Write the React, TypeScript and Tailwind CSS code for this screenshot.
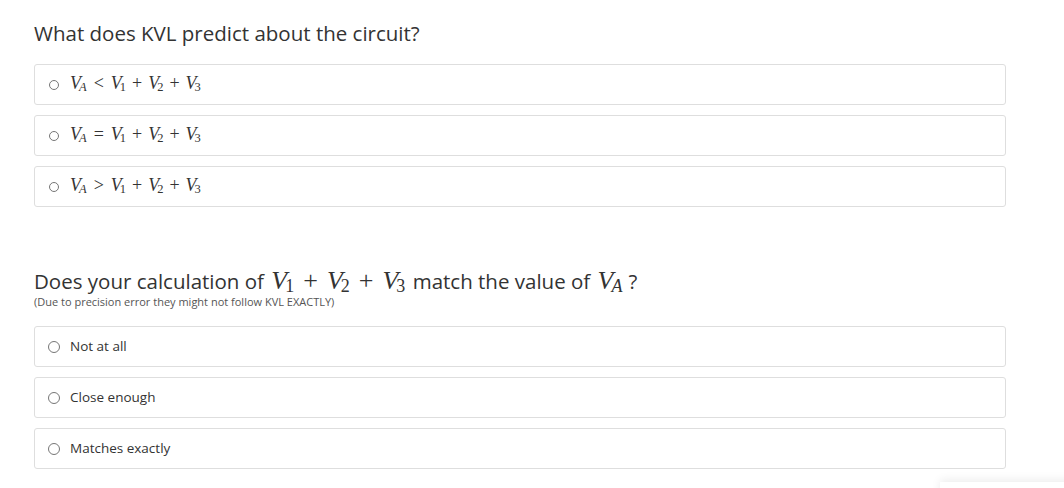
import type { ReactNode } from 'react';

const sans = { fontFamily: '"Open Sans", "Noto Sans", sans-serif' };

function V({ sub, big }: { sub: string; big?: boolean }) {
  return (
    <span className="whitespace-nowrap">
      <i>V</i>
      <sub
        className={
          big
            ? 'text-[18px] relative top-[3px] ml-[-2px]'
            : 'text-[12.5px] relative top-[2px] ml-[-2px]'
        }
        style={{ fontStyle: /[A-Z]/.test(sub) ? 'italic' : 'normal' }}
      >
        {sub}
      </sub>
    </span>
  );
}

function Math({ children, big }: { children: ReactNode; big?: boolean }) {
  return (
    <span
      className={big ? 'text-[26px] leading-none mx-[2px]' : 'text-[18px] leading-none'}
      style={{ fontFamily: '"Liberation Serif", "DejaVu Serif", serif' }}
    >
      {children}
    </span>
  );
}

function Op({ c, rel, big }: { c: string; rel?: boolean; big?: boolean }) {
  const cls = big
    ? 'mx-[9px] not-italic'
    : rel
      ? 'mx-[7px] not-italic'
      : 'mx-[6px] not-italic';
  return <span className={cls}>{c}</span>;
}

function Sum({ big }: { big?: boolean }) {
  return (
    <>
      <V sub="1" big={big} />
      <Op c="+" big={big} />
      <V sub="2" big={big} />
      <Op c="+" big={big} />
      <V sub="3" big={big} />
    </>
  );
}

function Radio({ small }: { small?: boolean }) {
  return (
    <span
      className={
        small
          ? 'inline-block w-[10px] h-[10px] rounded-full border border-[#767676] bg-white shrink-0'
          : 'inline-block w-[12px] h-[12px] rounded-full border border-[#767676] bg-white shrink-0'
      }
    />
  );
}

function Option({ children, small }: { children: ReactNode; small?: boolean }) {
  return (
    <div className="h-[41px] border border-[#dedede] rounded-[3px] flex items-center pl-[13px] gap-[10px]">
      <div className="w-[12px] flex justify-center">
        <Radio small={small} />
      </div>
      <div className="text-[13.5px] text-[#333]" style={sans}>
        {children}
      </div>
    </div>
  );
}

export default function App() {
  return (
    <div className="w-[1064px] h-[488px] bg-white relative overflow-hidden text-[#333]" style={sans}>
      <div className="pl-[34px] pr-[58px] pt-[18px]">
        <h2 className="text-[20.5px] leading-[30px]">What does KVL predict about the circuit?</h2>
        <div className="mt-[16px] flex flex-col gap-[10px]">
          <Option small>
            <Math>
              <V sub="A" />
              <Op c="<" rel />
              <Sum />
            </Math>
          </Option>
          <Option small>
            <Math>
              <V sub="A" />
              <Op c="=" rel />
              <Sum />
            </Math>
          </Option>
          <Option small>
            <Math>
              <V sub="A" />
              <Op c=">" rel />
              <Sum />
            </Math>
          </Option>
        </div>

        <div className="mt-[60px]">
          <h2 className="text-[20.5px] leading-[28px]">
            Does your calculation of{' '}
            <Math big>
              <Sum big />
            </Math>{' '}
            match the value of{' '}
            <Math big>
              <V sub="A" big />
            </Math>
            <span className="ml-[4px]">?</span>
          </h2>
          <div className="text-[11px] text-[#555] leading-[14px]">
            (Due to precision error they might not follow KVL EXACTLY)
          </div>
        </div>

        <div className="mt-[17px] flex flex-col gap-[10px]">
          <Option>Not at all</Option>
          <Option>Close enough</Option>
          <Option>Matches exactly</Option>
        </div>
      </div>
      <div className="absolute left-[940px] bottom-[-14px] w-[160px] h-[20px] bg-white shadow-[0_-2px_10px_rgba(0,0,0,0.08)]" />
    </div>
  );
}
